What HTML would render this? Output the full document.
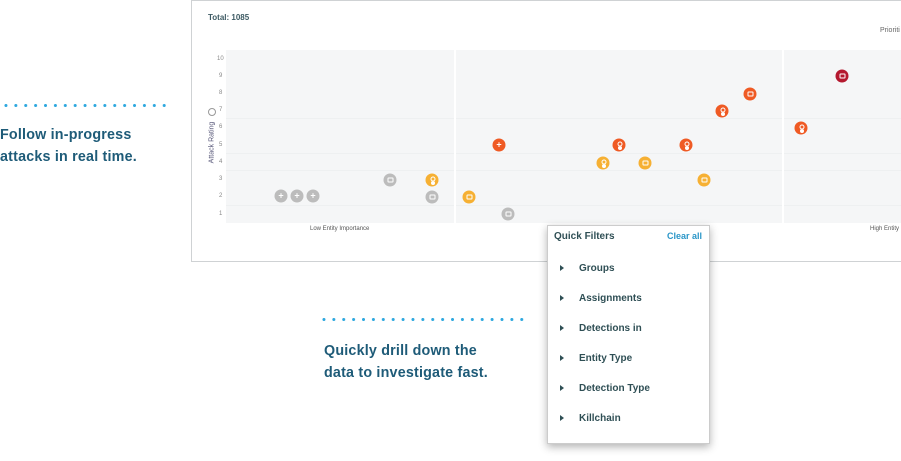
<!DOCTYPE html>
<html><head><style>
body{margin:0;width:901px;height:461px;background:#fff;position:relative;overflow:hidden;font-family:"Liberation Sans",sans-serif}
.t{position:absolute;color:#1e5b78;font-weight:bold;font-size:14.3px;line-height:22px;letter-spacing:.2px}
.dots{position:absolute;height:3px;background-image:radial-gradient(circle,#2ea8df 1.4px,transparent 1.6px);background-size:9.9px 3px}
#frame{position:absolute;left:191px;top:0;width:720px;height:262px;border:1px solid #cfd2d4;box-sizing:border-box;background:#fff}
.plot{position:absolute;left:226px;top:50px;width:680px;height:173px;background:#f5f6f7}
.vs{position:absolute;top:50px;width:2px;height:173px;background:#fff}
.hl{position:absolute;left:226px;width:680px;height:1px;background:#eef0f1}
.yl{position:absolute;left:217px;font-size:6px;color:#888}
.d{position:absolute;width:13px;height:13px;border-radius:50%;transform:translate(-6.5px,-6.5px);color:#fff;font-size:9px;line-height:13px;text-align:center;font-weight:bold}
.g{background:#bcbcbc}.y{background:#f6b033}.r{background:#ef5a24}.k{background:#b4192f}
.m::after{content:"";position:absolute;left:3.5px;top:4px;width:4px;height:3px;border:1px solid #fff;border-radius:1px}
.p::after{content:"";position:absolute;left:4.5px;top:3px;width:3px;height:3px;border:1px solid #fff;border-radius:50%;box-shadow:0 4px 0 -0.5px #fff}
#qf{position:absolute;left:547px;top:225px;width:163px;height:219px;background:#fff;border:1px solid #ccc;box-sizing:border-box;box-shadow:0 3px 8px rgba(0,0,0,.3)}
.qi{position:absolute;left:31px;font-size:10px;font-weight:bold;color:#2f4f55}
.tri{position:absolute;left:12px;width:0;height:0;border-left:4px solid #2f4f55;border-top:3.5px solid transparent;border-bottom:3.5px solid transparent}
</style></head><body>
<div class="dots" style="left:1px;top:104px;width:168px"></div>
<div class="t" style="left:0;top:124px">Follow in-progress<br>attacks in real time.</div>
<div class="dots" style="left:319px;top:318px;width:205px"></div>
<div class="t" style="left:324px;top:340px">Quickly drill down the<br>data to investigate fast.</div>
<div id="frame"></div>
<div style="position:absolute;left:208px;top:13px;font-size:8px;font-weight:bold;color:#3d5a63">Total: 1085</div>
<div style="position:absolute;left:880px;top:27px;font-size:7px;color:#666">Prioriti</div>
<div class="plot"></div>
<div class="hl" style="top:118px"></div><div class="hl" style="top:153px"></div><div class="hl" style="top:170px"></div><div class="hl" style="top:205px"></div>
<div class="vs" style="left:454px"></div><div class="vs" style="left:782px"></div>
<div class="yl" style="top:56px">10</div><div class="yl" style="top:73px;left:219px">9</div><div class="yl" style="top:90px;left:219px">8</div><div class="yl" style="top:107px;left:219px">7</div><div class="yl" style="top:124px;left:219px">6</div><div class="yl" style="top:142px;left:219px">5</div><div class="yl" style="top:159px;left:219px">4</div><div class="yl" style="top:176px;left:219px">3</div><div class="yl" style="top:193px;left:219px">2</div><div class="yl" style="top:211px;left:219px">1</div>
<div style="position:absolute;left:182px;top:139px;transform:rotate(-90deg);font-size:7px;color:#557;width:60px;text-align:center">Attack Rating</div>
<div style="position:absolute;left:208px;top:108px;width:6px;height:6px;border:1px solid #999;border-radius:50%"></div>
<div style="position:absolute;left:310px;top:226px;font-size:6px;color:#555">Low Entity Importance</div>
<div style="position:absolute;left:870px;top:226px;font-size:6px;color:#555">High Entity</div>
<div class="d g" style="left:281px;top:196px">+</div><div class="d g" style="left:297px;top:196px">+</div><div class="d g" style="left:313px;top:196px">+</div>
<div class="d g m" style="left:390px;top:180px"></div>
<div class="d y p" style="left:432px;top:180px"></div>
<div class="d g m" style="left:432px;top:197px"></div>
<div class="d y m" style="left:469px;top:197px"></div>
<div class="d g m" style="left:508px;top:214px"></div>
<div class="d r" style="left:499px;top:145px">+</div>
<div class="d r p" style="left:619px;top:145px"></div>
<div class="d y p" style="left:603px;top:163px"></div>
<div class="d y m" style="left:645px;top:163px"></div>
<div class="d r p" style="left:686px;top:145px"></div>
<div class="d y m" style="left:704px;top:180px"></div>
<div class="d r p" style="left:722px;top:111px"></div>
<div class="d r m" style="left:750px;top:94px"></div>
<div class="d r p" style="left:801px;top:128px"></div>
<div class="d k m" style="left:842px;top:76px"></div>
<div id="qf">
<div style="position:absolute;left:6px;top:5px;font-size:10px;font-weight:bold;color:#2f4f55">Quick Filters</div>
<div style="position:absolute;left:119px;top:5px;font-size:9px;font-weight:bold;color:#2a96c8">Clear all</div>
<div class="tri" style="top:39px"></div><div class="qi" style="top:37px">Groups</div>
<div class="tri" style="top:69px"></div><div class="qi" style="top:67px">Assignments</div>
<div class="tri" style="top:99px"></div><div class="qi" style="top:97px">Detections in</div>
<div class="tri" style="top:129px"></div><div class="qi" style="top:127px">Entity Type</div>
<div class="tri" style="top:159px"></div><div class="qi" style="top:157px">Detection Type</div>
<div class="tri" style="top:189px"></div><div class="qi" style="top:187px">Killchain</div>
</div>
</body></html>
